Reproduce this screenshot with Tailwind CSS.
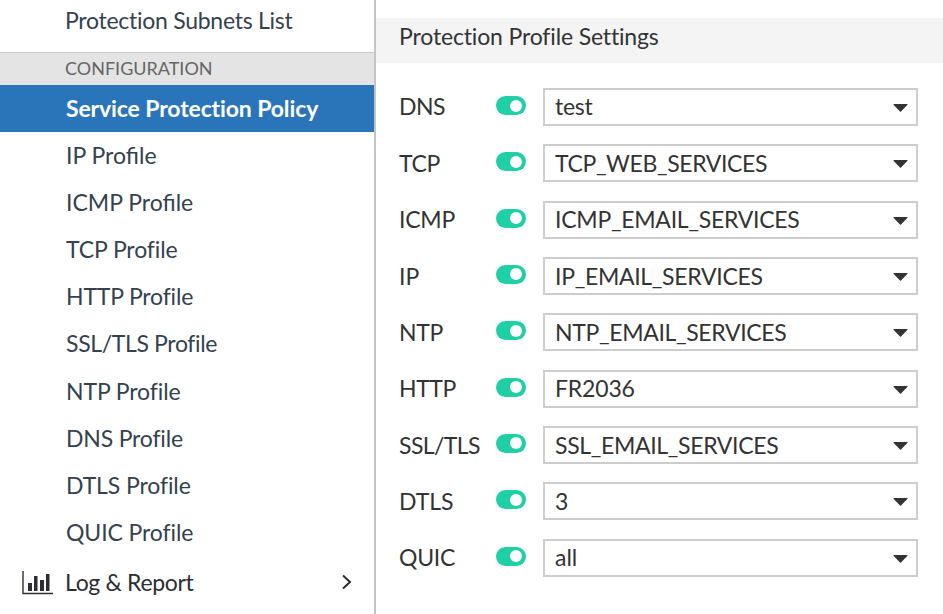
<!DOCTYPE html>
<html>
<head>
<meta charset="utf-8">
<script src="https://cdn.jsdelivr.net/npm/@tailwindcss/browser@4"></script>
</head>
<body class="m-0 bg-white overflow-hidden">
<div class="flex w-[943px] h-[614px] overflow-hidden font-['Lato','Carlito',sans-serif] text-[#333]">
  <aside class="w-[376px] shrink-0 h-full border-r-2 border-[#c4c4c4] flex flex-col text-[23px] text-[#34414f]">
    <div class="h-[52px] shrink-0 pl-[65px] pb-[12px] flex items-center tracking-[-0.27px]">Protection Subnets List</div>
    <div class="h-[33px] shrink-0 bg-[#e4e4e4] border-t border-[#c8c8c8] pl-[65px] pb-[2px] flex items-center text-[18px] text-[#666]">CONFIGURATION</div>
    <div class="h-[47px] shrink-0 bg-[#2a75ba] pl-[66px] flex items-center font-bold text-white tracking-[-0.12px]">Service Protection Policy</div>
    <nav class="flex flex-col -mt-[0.42px]">
      <a class="h-[47.14px] pl-[66px] flex items-center">IP Profile</a>
      <a class="h-[47.14px] pl-[66px] flex items-center">ICMP Profile</a>
      <a class="h-[47.14px] pl-[66px] flex items-center tracking-[-0.1px]">TCP Profile</a>
      <a class="h-[47.14px] pl-[66px] flex items-center tracking-[-0.17px]">HTTP Profile</a>
      <a class="h-[47.14px] pl-[66px] flex items-center tracking-[-0.35px]">SSL/TLS Profile</a>
      <a class="h-[47.14px] pl-[66px] flex items-center tracking-[-0.1px]">NTP Profile</a>
      <a class="h-[47.14px] pl-[66px] flex items-center tracking-[-0.18px]">DNS Profile</a>
      <a class="h-[47.14px] pl-[66px] flex items-center tracking-[-0.1px]">DTLS Profile</a>
      <a class="h-[47.14px] pl-[66px] flex items-center tracking-[-0.1px]">QUIC Profile</a>
    </nav>
    <div class="h-[54px] flex items-center pl-[22px] pr-[21px] pb-[2px] text-[#2d2d33]">
      <svg class="w-[32px] h-[24px] mr-[11px] shrink-0 mt-[2px]" viewBox="0 0 32 24"><path d="M1 0V22.500H31" fill="none" stroke="#2d2d33" stroke-width="1.400"/><path d="M6 12h4v8H6zM12 5h3.500v15H12zM18 9h4v11h-4zM24 3h3.500v17H24z" fill="#2d2d33"/></svg>
      <span class="flex-1 mt-[2px] tracking-[-0.33px]">Log &amp; Report</span>
      <svg class="w-[12px] h-[16px]" viewBox="0 0 12 16"><path d="M2 1.500 9 8 2 14.500" fill="none" stroke="#2d2d33" stroke-width="2"/></svg>
    </div>
  </aside>
  <main class="flex-1 pt-[18px] min-w-0">
    <div class="h-[45px] bg-[#f4f4f4] pl-[23px] pb-[8px] flex items-center text-[23px] text-[#333] tracking-[-0.15px]">Protection Profile Settings</div>
    <div class="mt-[25px] pl-[23px] pr-[25px] flex flex-col gap-[18.33px] text-[23px]">
      <div class="h-[38px] flex items-center"><span class="w-[97px] -mt-[2px] tracking-[-0.5px]">DNS</span><span class="w-[30px] h-[19px] rounded-full bg-[#1fcfa6] flex items-center justify-end pr-[4px] -mt-[3px]"><span class="w-[12px] h-[12px] rounded-full bg-white"></span></span><div class="ml-[17px] flex-1 h-[38px] border-2 border-[#cdcdcd] pl-[10px] pr-[8px] flex items-center justify-between"><span class="tracking-[-0.25px] -mt-[2px]">test</span><svg class="w-[15px] h-[8px] mt-[2px]" viewBox="0 0 15 8"><path d="M1 0H14Q15 0 14.300 1L8 7.500Q7.500 8 7 7.500L.7 1Q0 0 1 0Z" fill="#333"/></svg></div></div>
      <div class="h-[38px] flex items-center"><span class="w-[97px] tracking-[-0.3px]">TCP</span><span class="w-[30px] h-[19px] rounded-full bg-[#1fcfa6] flex items-center justify-end pr-[4px] -mt-[3px]"><span class="w-[12px] h-[12px] rounded-full bg-white"></span></span><div class="ml-[17px] flex-1 h-[38px] border-2 border-[#cdcdcd] pl-[10px] pr-[8px] flex items-center justify-between"><span class="tracking-[-0.37px]">TCP_WEB_SERVICES</span><svg class="w-[15px] h-[8px] mt-[2px]" viewBox="0 0 15 8"><path d="M1 0H14Q15 0 14.300 1L8 7.500Q7.500 8 7 7.500L.7 1Q0 0 1 0Z" fill="#333"/></svg></div></div>
      <div class="h-[38px] flex items-center"><span class="w-[97px] tracking-[-0.25px]">ICMP</span><span class="w-[30px] h-[19px] rounded-full bg-[#1fcfa6] flex items-center justify-end pr-[4px] -mt-[3px]"><span class="w-[12px] h-[12px] rounded-full bg-white"></span></span><div class="ml-[17px] flex-1 h-[38px] border-2 border-[#cdcdcd] pl-[10px] pr-[8px] flex items-center justify-between"><span class="tracking-[-0.26px]">ICMP_EMAIL_SERVICES</span><svg class="w-[15px] h-[8px] mt-[2px]" viewBox="0 0 15 8"><path d="M1 0H14Q15 0 14.300 1L8 7.500Q7.500 8 7 7.500L.7 1Q0 0 1 0Z" fill="#333"/></svg></div></div>
      <div class="h-[38px] flex items-center"><span class="w-[97px]">IP</span><span class="w-[30px] h-[19px] rounded-full bg-[#1fcfa6] flex items-center justify-end pr-[4px] -mt-[3px]"><span class="w-[12px] h-[12px] rounded-full bg-white"></span></span><div class="ml-[17px] flex-1 h-[38px] border-2 border-[#cdcdcd] pl-[10px] pr-[8px] flex items-center justify-between"><span class="tracking-[-0.3px]">IP_EMAIL_SERVICES</span><svg class="w-[15px] h-[8px] mt-[2px]" viewBox="0 0 15 8"><path d="M1 0H14Q15 0 14.300 1L8 7.500Q7.500 8 7 7.500L.7 1Q0 0 1 0Z" fill="#333"/></svg></div></div>
      <div class="h-[38px] flex items-center"><span class="w-[97px] tracking-[-0.3px]">NTP</span><span class="w-[30px] h-[19px] rounded-full bg-[#1fcfa6] flex items-center justify-end pr-[4px] -mt-[3px]"><span class="w-[12px] h-[12px] rounded-full bg-white"></span></span><div class="ml-[17px] flex-1 h-[38px] border-2 border-[#cdcdcd] pl-[10px] pr-[8px] flex items-center justify-between"><span class="tracking-[-0.33px]">NTP_EMAIL_SERVICES</span><svg class="w-[15px] h-[8px] mt-[2px]" viewBox="0 0 15 8"><path d="M1 0H14Q15 0 14.300 1L8 7.500Q7.500 8 7 7.500L.7 1Q0 0 1 0Z" fill="#333"/></svg></div></div>
      <div class="h-[38px] flex items-center"><span class="w-[97px] tracking-[-0.4px]">HTTP</span><span class="w-[30px] h-[19px] rounded-full bg-[#1fcfa6] flex items-center justify-end pr-[4px] -mt-[3px]"><span class="w-[12px] h-[12px] rounded-full bg-white"></span></span><div class="ml-[17px] flex-1 h-[38px] border-2 border-[#cdcdcd] pl-[10px] pr-[8px] flex items-center justify-between"><span class="tracking-[-0.17px]">FR2036</span><svg class="w-[15px] h-[8px] mt-[2px]" viewBox="0 0 15 8"><path d="M1 0H14Q15 0 14.300 1L8 7.500Q7.500 8 7 7.500L.7 1Q0 0 1 0Z" fill="#333"/></svg></div></div>
      <div class="h-[38px] flex items-center"><span class="w-[97px] tracking-[-0.6px]">SSL/TLS</span><span class="w-[30px] h-[19px] rounded-full bg-[#1fcfa6] flex items-center justify-end pr-[4px] -mt-[3px]"><span class="w-[12px] h-[12px] rounded-full bg-white"></span></span><div class="ml-[17px] flex-1 h-[38px] border-2 border-[#cdcdcd] pl-[10px] pr-[8px] flex items-center justify-between"><span class="tracking-[-0.33px]">SSL_EMAIL_SERVICES</span><svg class="w-[15px] h-[8px] mt-[2px]" viewBox="0 0 15 8"><path d="M1 0H14Q15 0 14.300 1L8 7.500Q7.500 8 7 7.500L.7 1Q0 0 1 0Z" fill="#333"/></svg></div></div>
      <div class="h-[38px] flex items-center"><span class="w-[97px]">DTLS</span><span class="w-[30px] h-[19px] rounded-full bg-[#1fcfa6] flex items-center justify-end pr-[4px] -mt-[3px]"><span class="w-[12px] h-[12px] rounded-full bg-white"></span></span><div class="ml-[17px] flex-1 h-[38px] border-2 border-[#cdcdcd] pl-[10px] pr-[8px] flex items-center justify-between"><span>3</span><svg class="w-[15px] h-[8px] mt-[2px]" viewBox="0 0 15 8"><path d="M1 0H14Q15 0 14.300 1L8 7.500Q7.500 8 7 7.500L.7 1Q0 0 1 0Z" fill="#333"/></svg></div></div>
      <div class="h-[38px] flex items-center"><span class="w-[97px] tracking-[-0.25px]">QUIC</span><span class="w-[30px] h-[19px] rounded-full bg-[#1fcfa6] flex items-center justify-end pr-[4px] -mt-[3px]"><span class="w-[12px] h-[12px] rounded-full bg-white"></span></span><div class="ml-[17px] flex-1 h-[38px] border-2 border-[#cdcdcd] pl-[10px] pr-[8px] flex items-center justify-between"><span>all</span><svg class="w-[15px] h-[8px] mt-[2px]" viewBox="0 0 15 8"><path d="M1 0H14Q15 0 14.300 1L8 7.500Q7.500 8 7 7.500L.7 1Q0 0 1 0Z" fill="#333"/></svg></div></div>
    </div>
  </main>
</div>
</body>
</html>
